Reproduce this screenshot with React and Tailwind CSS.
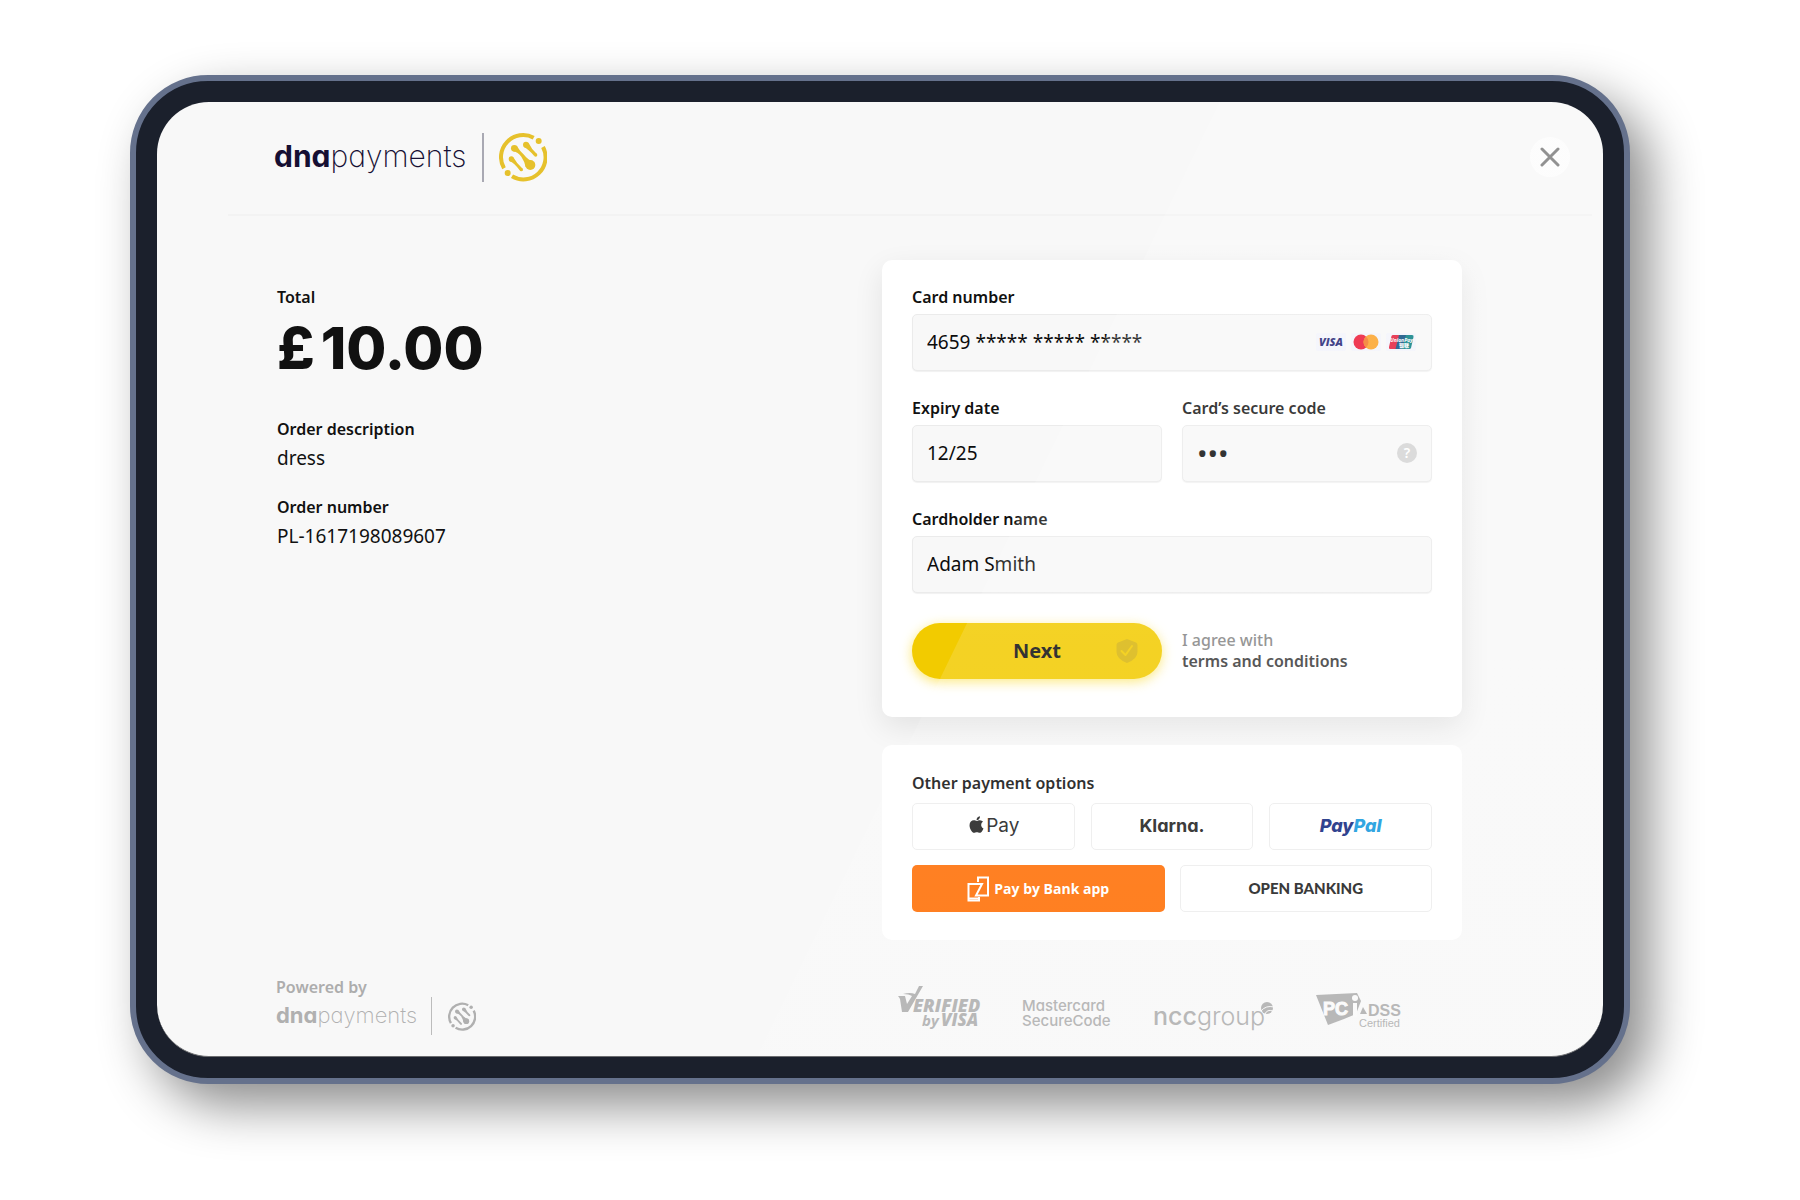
import React, { useState } from 'react';
import { FaApple } from 'react-icons/fa';

const LogoMark = ({ className }) => (
    <svg viewBox="0 0 144 148" className={className} fill="currentColor" aria-hidden="true">
        <g fill="none" stroke="currentColor" strokeWidth="12">
            <path d="M15 108A66.500 66.500 0 0 1 104 16" />
            <path d="M132 44A66.500 66.500 0 0 1 39 132" />
        </g>
        <circle cx="119" cy="26" r="9" />
        <circle cx="26" cy="122" r="9" />
        <circle cx="81" cy="37" r="9" />
        <circle cx="110" cy="68" r="5" />
        <path d="M74 43Q88 50 105 70L113 64Q97 50 89 32Z" />
        <circle cx="46" cy="48" r="10" />
        <circle cx="94" cy="98" r="15" />
        <path d="M40 56Q58 60 67 73Q76 86 80 104L107 91Q86 82 75 67Q62 56 54 42Z" />
        <circle cx="37" cy="80" r="8" />
        <circle cx="67" cy="112" r="5" />
        <path d="M31 86Q46 92 62 114L71 109Q53 93 44 76Z" />
    </svg>
);

const Wordmark = ({ className }) => (
    <span className={`pb-[2px] font-['Inter',sans-serif] [font-feature-settings:'cv11'] ${className}`}>
        <span className="font-bold">dna</span>
        <span className="font-extralight">payments</span>
    </span>
);

const CardBrands = () => (
    <div className="absolute inset-y-0 right-4 flex items-center gap-[5px] pb-px pointer-events-none">
        <svg viewBox="0 0 30 18" className="h-[18px] w-[30px]" role="img" aria-label="Visa">
            <rect width="30" height="18" rx="2" fill="#f3f4fb" />
            <text x="15" y="13" textAnchor="middle" fontFamily="Open Sans, sans-serif" fontWeight="800" fontStyle="italic" fontSize="11" fill="#1a1b70">VISA</text>
        </svg>
        <svg viewBox="0 0 30 18" className="h-[18px] w-[30px]" role="img" aria-label="Mastercard">
            <rect width="30" height="18" rx="2" fill="#f3f4fb" />
            <circle cx="10" cy="9" r="7.500" fill="#ec1230" />
            <circle cx="20" cy="9" r="7.500" fill="#fba023" />
            <path d="M15 3.400A7.500 7.500 0 0 1 15 14.600A7.500 7.500 0 0 1 15 3.400Z" fill="#f37520" />
        </svg>
        <svg viewBox="0 0 30 18" className="h-[18px] w-[30px]" role="img" aria-label="UnionPay">
            <rect width="30" height="18" rx="2" fill="#f3f4fb" />
            <path d="M7 2H14L11 16H4Q2.500 16 3 14L5.500 3Q6 2 7 2Z" fill="#e21836" />
            <path d="M13 2H21L17 16H9.500Z" fill="#064a7c" />
            <path d="M20 2H26Q28 2 27.500 4L25 15Q24.500 16 23.500 16H16Z" fill="#017c80" />
            <text x="15.500" y="8.500" textAnchor="middle" fontFamily="Open Sans, sans-serif" fontWeight="700" fontStyle="italic" fontSize="5" fill="#fff">UnionPay</text>
            <text x="18" y="14" textAnchor="middle" fontFamily="Noto Sans CJK SC, sans-serif" fontWeight="900" fontSize="5" fill="#fff">银联</text>
        </svg>
    </div>
);

const Field = ({ id, label, className = '', type = 'text', children, ...props }) => (
    <div className={`flex flex-col gap-[5px] ${className}`}>
        <label htmlFor={id} className="text-base leading-6 font-semibold text-[#111]">{label}</label>
        <div className="relative">
            <input id={id} type={type} {...props}
                className={`block h-[57px] w-full rounded-[5px] border border-[#ebebeb] bg-[#f8f8f8] px-[14px] pb-[2px] text-[#0c0c0c] shadow-[0_1px_1px_rgba(0,0,0,0.06)] outline-none ${type === 'password' ? 'text-[28px]' : 'text-[19px]'}`} />
            {children}
        </div>
    </div>
);

const Detail = ({ label, value }) => (
    <div className="flex flex-col gap-[5px]">
        <dt className="text-base leading-6 font-semibold">{label}</dt>
        <dd className="text-[19px] leading-6">{value}</dd>
    </div>
);

const ZappIcon = () => (
    <svg viewBox="0 0 22 26" className="h-[26px] w-[22px]" fill="none" stroke="currentColor" strokeWidth="2" aria-hidden="true">
        <path d="M11 6V1.500H21V19.500H9L15 8H1.500V24.500H12V21" />
        <path d="M2 22.500H12" />
    </svg>
);

const TrustLogos = () => (
    <div className="flex w-[580px] items-end gap-[42px] pt-[7px] pl-4 text-[#b0b0b0]">
        <svg viewBox="0 0 82 46" className="h-[46px] w-[82px] overflow-visible" fill="currentColor" role="img" aria-label="Verified by Visa">
            <path d="M0 12H7L9 20L14 12Q11 10 5 10Q12 8 17 10L21 2H25L10 28H4L2 15Q1 13 0 12Z" />
            <g fontFamily="Open Sans, sans-serif" fontWeight="800" fontStyle="italic">
                <text x="15" y="28" fontSize="18">ERIFIED</text>
                <text x="24" y="42" fontSize="15" fontWeight="700">by</text>
                <text x="43" y="42" fontSize="17">VISA</text>
            </g>
        </svg>
        <div className="w-[90px] pb-[2px] font-['Inter',sans-serif] text-[15px] leading-[15px] font-medium [font-feature-settings:'cv11']">
            Mastercard<br />SecureCode
        </div>
        <svg viewBox="0 0 120 40" className="h-10 w-[120px] overflow-visible" fill="currentColor" role="img" aria-label="ncc group">
            <text x="-1" y="35" fontFamily="Inter, sans-serif" fontSize="25" fontWeight="300">
                <tspan fontWeight="500">ncc</tspan>group
            </text>
            <circle cx="113" cy="18" r="6" />
            <path d="M107 21Q112 15 120 17M111 24Q113 19 119 21" fill="none" stroke="#f9f9f9" strokeWidth="1" />
        </svg>
        <svg viewBox="0 0 86 38" className="h-[38px] w-[86px] overflow-visible" fill="currentColor" role="img" aria-label="PCI DSS Certified">
            <path d="M0 3L41 1L45 9L40 22L28 27L12 33Z" />
            <g fontFamily="Liberation Sans, sans-serif">
                <text x="7" y="23" fontSize="18" fontWeight="700" fill="#fafafa" stroke="#fafafa">PC</text>
                <text x="52" y="24" fontSize="16" fontWeight="700">DSS</text>
                <text x="43" y="35" fontSize="11">Certified</text>
            </g>
            <circle cx="39" cy="6" r="3" fill="#fafafa" />
            <path d="M37 11H41V25H37Z" fill="#fafafa" />
            <path d="M44 22L47 15L51 22Z" />
        </svg>
    </div>
);

const optionClass = "flex h-[47px] items-center justify-center rounded-[5px] border border-[#ededed] bg-white pb-px text-[#202020]";

const App = () => {
    const [form, setForm] = useState({
        number: '4659 ***** ***** *****',
        expiry: '12/25',
        code: '123',
        name: 'Adam Smith',
    });

    const update = (key) => (e) => setForm({ ...form, [key]: e.target.value });

    return (
        <div className="min-h-screen bg-white pt-[75px] pr-[170px] pb-[115px] pl-[130px] font-['Noto_Sans',sans-serif] text-[#111]">
            <div className="rounded-[78px] border-6 border-[#65718c] bg-[#1b202c] p-[21px] shadow-[20px_22px_50px_rgba(0,0,0,0.45)]">
                <div className="relative overflow-hidden rounded-[52px] border-b border-[#6c6d70] bg-[#f8f8f8]">
                    <header className="mr-[11px] ml-[71px] flex h-[114px] items-center justify-between border-b-2 border-[#f3f3f3] pr-[22px] pb-[2px] pl-[46px]">
                        <div className="flex items-center text-[#160f33]">
                            <Wordmark className="text-[30px] leading-10" />
                            <span className="ml-4 h-[49px] w-[2px] bg-[#a9a9b3]" />
                            <LogoMark className="ml-[15px] h-[50px] w-[48px] text-[#e6c12c]" />
                        </div>
                        <button type="button" aria-label="Close" className="flex size-10 items-center justify-center rounded-full bg-white/60 text-[#777]">
                            <svg viewBox="0 0 20 20" className="size-5" stroke="currentColor" strokeWidth="3" strokeLinecap="round">
                                <path d="M2 2L18 18M18 2L2 18" />
                            </svg>
                        </button>
                    </header>

                    <main className="mt-11 flex items-start justify-between pr-[141px] pl-[120px]">
                        <section className="pt-[25px]">
                            <h2 className="text-base leading-6 font-semibold">Total</h2>
                            <p className="mt-[9px] flex gap-[6px] font-['Inter',sans-serif] text-[58px] leading-[60px] font-extrabold">
                                <span>£</span>
                                <span>10.00</span>
                            </p>
                            <dl className="mt-[39px] flex flex-col gap-[25px]">
                                <Detail label="Order description" value="dress" />
                                <Detail label="Order number" value="PL-1617198089607" />
                            </dl>
                        </section>

                        <div className="flex w-[580px] flex-col gap-7">
                            <form onSubmit={(e) => e.preventDefault()}
                                className="rounded-[10px] bg-white px-[30px] pt-[25px] pb-[38px] shadow-[0_10px_30px_rgba(0,0,0,0.09)]">
                                <div className="grid grid-cols-2 gap-x-5 gap-y-[25px]">
                                    <Field id="number" label="Card number" className="col-span-2" value={form.number} onChange={update('number')}>
                                        <CardBrands />
                                    </Field>
                                    <Field id="expiry" label="Expiry date" value={form.expiry} onChange={update('expiry')} />
                                    <Field id="code" label="Card’s secure code" type="password" value={form.code} onChange={update('code')}>
                                        <span className="absolute top-[18px] right-[15px] flex size-5 items-center justify-center rounded-full bg-[#d4d4d4] text-sm font-semibold text-white">?</span>
                                    </Field>
                                    <Field id="name" label="Cardholder name" className="col-span-2" value={form.name} onChange={update('name')} />
                                </div>
                                <div className="mt-[30px] grid grid-cols-2 items-center gap-5">
                                    <button type="submit" className="relative h-14 rounded-full bg-[#f2cb00] text-xl font-bold text-[#111] shadow-[0_3px_12px_rgba(250,215,20,0.6)]">
                                        Next
                                        <svg viewBox="0 0 22 24" className="absolute top-4 right-6 h-6 w-[22px]" aria-hidden="true">
                                            <path d="M11 0L20 3.500Q21.500 4 21.500 6V13Q21.500 20 11 24Q0.500 20 0.500 13V6Q0.500 4 2 3.500Z" fill="#d9b60d" />
                                            <path d="M5.500 12L9.500 16L16 7" fill="none" stroke="#f2cb00" strokeWidth="2" strokeLinecap="round" strokeLinejoin="round" />
                                        </svg>
                                    </button>
                                    <p className="text-base leading-[21px] font-medium text-[#858585]">
                                        I agree with<br />
                                        <a href="#terms" className="font-semibold text-[#3c3c3c]">terms and conditions</a>
                                    </p>
                                </div>
                            </form>

                            <section className="rounded-[10px] bg-white px-[30px] pt-[26px] pb-7">
                                <h2 className="text-base leading-6 font-semibold">Other payment options</h2>
                                <div className="mt-2 grid grid-cols-3 gap-4">
                                    <button type="button" className={optionClass}>
                                        <FaApple className="mb-[3px] size-[19px]" />
                                        <span className="font-['Inter',sans-serif] text-[19px]">Pay</span>
                                    </button>
                                    <button type="button" className={`${optionClass} font-['Inter',sans-serif] text-lg font-bold [font-feature-settings:'cv11']`}>Klarna.</button>
                                    <button type="button" className={`${optionClass} font-['Inter',sans-serif] text-lg font-extrabold italic [font-feature-settings:'cv11']`}>
                                        <span className="text-[#13297f]">Pay</span><span className="text-[#1499dd]">Pal</span>
                                    </button>
                                </div>
                                <div className="mt-[15px] grid grid-cols-2 gap-[15px]">
                                    <button type="button" className="flex h-[47px] items-center justify-center gap-[5px] rounded-[5px] bg-[#ff6f05] font-['Open_Sans',sans-serif] text-sm font-bold text-white">
                                        <ZappIcon />
                                        Pay by Bank app
                                    </button>
                                    <button type="button" className={`${optionClass} font-['Lato',sans-serif] text-[15px] font-black`}>OPEN BANKING</button>
                                </div>
                            </section>
                        </div>
                    </main>

                    <footer className="mt-[37px] flex items-start justify-between pr-[141px] pb-[21px] pl-[119px]">
                        <div>
                            <p className="text-base leading-5 font-semibold text-[#adadad]">Powered by</p>
                            <div className="flex h-[38px] items-center text-[#b0b0b0]">
                                <Wordmark className="text-[22px] leading-7" />
                                <span className="ml-[14px] h-[38px] w-px bg-[#bcbcbc]" />
                                <LogoMark className="ml-4 h-[29px] w-[28px]" />
                            </div>
                        </div>
                        <TrustLogos />
                    </footer>

                    {/* diagonal light streak over the glass */}
                    <div className="pointer-events-none absolute inset-0 bg-linear-to-b from-white/20 to-white/10 [clip-path:polygon(73.5%_0,100%_0,100%_100%,41.5%_100%)]" />
                </div>
            </div>
        </div>
    );
};

export default App;
